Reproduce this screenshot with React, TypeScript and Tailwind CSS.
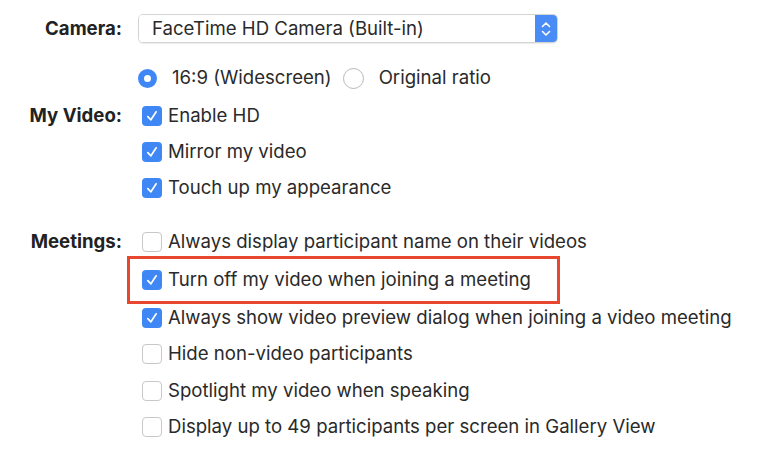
import React from "react";

const font = { fontFamily: "Inter, 'Noto Sans', sans-serif" };

function Check({ checked }: { checked: boolean }) {
  return checked ? (
    <div className="w-[20px] h-[20px] rounded-[4px] bg-[#3f87f5] flex items-center justify-center shrink-0">
      <svg width="14" height="14" viewBox="0 0 14 14">
        <path d="M2.8 7.6 L5.9 10.8 L11.2 2.8" fill="none" stroke="white" strokeWidth="1.7" strokeLinecap="round" strokeLinejoin="round" />
      </svg>
    </div>
  ) : (
    <div className="w-[20px] h-[20px] rounded-[4px] bg-white border border-[#c8c8c8] shrink-0" />
  );
}

function Row({ checked, label }: { checked: boolean; label: string }) {
  return (
    <div className="h-[28px] flex items-center gap-[6px] pl-[1px]">
      <Check checked={checked} />
      <span>{label}</span>
    </div>
  );
}

function Label({ children }: { children: React.ReactNode }) {
  return (
    <div className="w-[122px] shrink-0 h-[28px] flex items-center justify-end font-bold text-[#222]">
      {children}
    </div>
  );
}

export default function App() {
  return (
    <div className="w-[770px] h-[459px] bg-white text-[18.6px] text-[#2a2a2a] pt-[14px] overflow-hidden" style={font}>
      <div className="flex items-center">
        <div className="w-[122px] shrink-0 h-[29px] flex items-center justify-end font-bold text-[#222]">Camera:</div>
        <div className="ml-[16px] w-[420px] h-[29px] flex rounded-[5px] border border-[#d4d4d4] shadow-[0_1px_1px_rgba(0,0,0,0.08)] overflow-hidden">
          <div className="flex-1 flex items-center pl-[13px] bg-white">FaceTime HD Camera (Built-in)</div>
          <div className="w-[22px] bg-[#4a8cf6] flex items-center justify-center">
            <svg width="12" height="20" viewBox="0 0 12 20">
              <path d="M2.5 7.5 L6 4 L9.5 7.5" fill="none" stroke="white" strokeWidth="1.6" strokeLinecap="round" strokeLinejoin="round" />
              <path d="M2.5 12.5 L6 16 L9.5 12.5" fill="none" stroke="white" strokeWidth="1.6" strokeLinecap="round" strokeLinejoin="round" />
            </svg>
          </div>
        </div>
      </div>

      <div className="flex items-center mt-[21px]">
        <div className="w-[122px] shrink-0" />
        <div className="ml-[16px] h-[28px] flex items-center">
          <div className="w-[19px] h-[19px] rounded-full border-[6px] border-[#3f87f5] bg-white shrink-0" />
          <span className="ml-[15px]">16:9 (Widescreen)</span>
          <div className="ml-[11px] w-[21px] h-[21px] rounded-full border border-[#b8b8b8] bg-white shrink-0" />
          <span className="ml-[15px]">Original ratio</span>
        </div>
      </div>

      <div className="flex mt-[10px]">
        <Label>My Video:</Label>
        <div className="ml-[19px] flex flex-col gap-[8px]">
          <Row checked label="Enable HD" />
          <Row checked label="Mirror my video" />
          <Row checked label="Touch up my appearance" />
        </div>
      </div>

      <div className="flex mt-[26px]">
        <Label>Meetings:</Label>
        <div className="ml-[19px] flex flex-col">
          <Row checked={false} label="Always display participant name on their videos" />
          <div className="-ml-[14px] w-[433px] h-[48px] border-[3px] border-[#e8472f] pl-[11px] flex items-center">
            <Row checked label="Turn off my video when joining a meeting" />
          </div>
          <div className="flex flex-col gap-[8.4px]">
            <Row checked label="Always show video preview dialog when joining a video meeting" />
            <Row checked={false} label="Hide non-video participants" />
            <Row checked={false} label="Spotlight my video when speaking" />
            <Row checked={false} label="Display up to 49 participants per screen in Gallery View" />
          </div>
        </div>
      </div>
    </div>
  );
}
